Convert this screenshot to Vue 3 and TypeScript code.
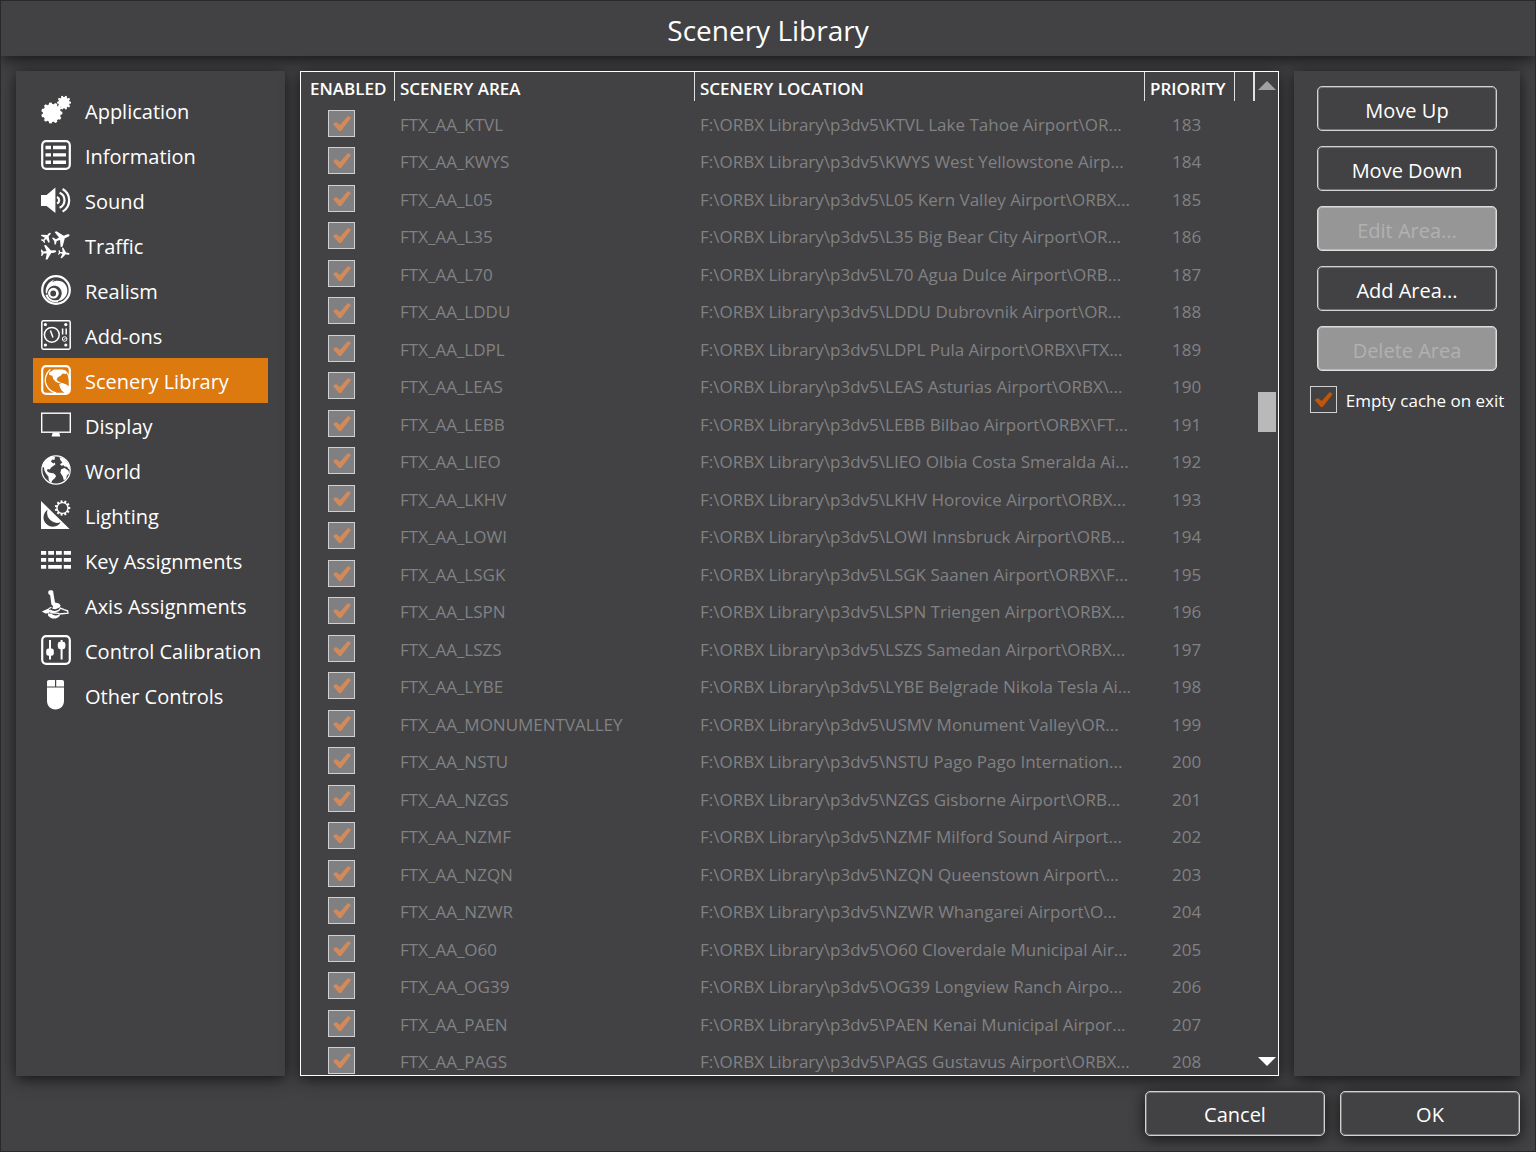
<script setup lang="ts">
import { ref } from 'vue'

interface MenuItem {
  id: string
  label: string
}

interface SceneryArea {
  area: string
  location: string
  priority: number
}

const menu: MenuItem[] = [
  { id: 'application', label: 'Application' },
  { id: 'information', label: 'Information' },
  { id: 'sound', label: 'Sound' },
  { id: 'traffic', label: 'Traffic' },
  { id: 'realism', label: 'Realism' },
  { id: 'addons', label: 'Add-ons' },
  { id: 'scenery', label: 'Scenery Library' },
  { id: 'display', label: 'Display' },
  { id: 'world', label: 'World' },
  { id: 'lighting', label: 'Lighting' },
  { id: 'keys', label: 'Key Assignments' },
  { id: 'axis', label: 'Axis Assignments' },
  { id: 'calibration', label: 'Control Calibration' },
  { id: 'other', label: 'Other Controls' },
]

const entries: [string, string][] = [
  ['KTVL', 'KTVL Lake Tahoe Airport\\OR...'],
  ['KWYS', 'KWYS West Yellowstone Airp...'],
  ['L05', 'L05 Kern Valley Airport\\ORBX...'],
  ['L35', 'L35 Big Bear City Airport\\OR...'],
  ['L70', 'L70 Agua Dulce Airport\\ORB...'],
  ['LDDU', 'LDDU Dubrovnik Airport\\OR...'],
  ['LDPL', 'LDPL Pula Airport\\ORBX\\FTX...'],
  ['LEAS', 'LEAS Asturias Airport\\ORBX\\...'],
  ['LEBB', 'LEBB Bilbao Airport\\ORBX\\FT...'],
  ['LIEO', 'LIEO Olbia Costa Smeralda Ai...'],
  ['LKHV', 'LKHV Horovice Airport\\ORBX...'],
  ['LOWI', 'LOWI Innsbruck Airport\\ORB...'],
  ['LSGK', 'LSGK Saanen Airport\\ORBX\\F...'],
  ['LSPN', 'LSPN Triengen Airport\\ORBX...'],
  ['LSZS', 'LSZS Samedan Airport\\ORBX...'],
  ['LYBE', 'LYBE Belgrade Nikola Tesla Ai...'],
  ['MONUMENTVALLEY', 'USMV Monument Valley\\OR...'],
  ['NSTU', 'NSTU Pago Pago Internation...'],
  ['NZGS', 'NZGS Gisborne Airport\\ORB...'],
  ['NZMF', 'NZMF Milford Sound Airport...'],
  ['NZQN', 'NZQN Queenstown Airport\\...'],
  ['NZWR', 'NZWR Whangarei Airport\\O...'],
  ['O60', 'O60 Cloverdale Municipal Air...'],
  ['OG39', 'OG39 Longview Ranch Airpo...'],
  ['PAEN', 'PAEN Kenai Municipal Airpor...'],
  ['PAGS', 'PAGS Gustavus Airport\\ORBX...'],
]

const areas: SceneryArea[] = entries.map(([code, folder], index) => ({
  area: `FTX_AA_${code}`,
  location: `F:\\ORBX Library\\p3dv5\\${folder}`,
  priority: 183 + index,
}))

const selected = ref('scenery')
const emptyCache = ref(true)

// Closed outline of a cog wheel with square teeth.
function cog(cx: number, cy: number, outer: number, inner: number, teeth: number): string {
  const step = (Math.PI * 2) / teeth
  const points: string[] = []
  for (let i = 0; i < teeth; i++) {
    const corners: [number, number][] = [[-0.34, inner], [-0.2, outer], [0.2, outer], [0.34, inner]]
    for (const [offset, radius] of corners) {
      const angle = (i + offset) * step
      points.push(`${(cx + radius * Math.cos(angle)).toFixed(2)} ${(cy + radius * Math.sin(angle)).toFixed(2)}`)
    }
  }
  return `M${points.join('L')}Z`
}

const plane =
  'M0-10C1-10 1.6-8.5 1.6-7V-3.4L9.5 2.6V5L1.6 2.6L1.2 6.6L4.2 8.8V10.4L0 9.3L-4.2 10.4V8.8L-1.2 6.6L-1.6 2.6L-9.5 5V2.6L-1.6-3.4V-7C-1.6-8.5-1-10 0-10Z'
</script>

<template>
  <div class="window">
    <header class="title-bar">
      <h1>Scenery Library</h1>
    </header>

    <main class="content">
      <nav class="panel menu" aria-label="Settings">
        <button
          v-for="item in menu"
          :key="item.id"
          type="button"
          class="menu-item"
          :class="{ active: item.id === selected }"
          @click="selected = item.id"
        >
          <svg class="icon" viewBox="0 0 30 30" aria-hidden="true">
            <g v-if="item.id === 'application'" class="solid">
              <path :d="cog(10.8, 18, 10.6, 9, 11)" />
              <path :d="cog(23, 7.6, 7, 5.6, 10)" />
            </g>
            <g v-else-if="item.id === 'information'">
              <rect class="line" x="1.2" y="1.2" width="27.6" height="27.6" rx="4" stroke-width="2.2" />
              <path class="solid" d="M4.5 5.8H10V9.2H4.5ZM12 5.8H25V9.2H12ZM4.5 13.2H10V16.6H4.5ZM12 13.2H25V16.6H12ZM4.5 20.6H10V24H4.5ZM12 20.6H25V24H12Z" />
            </g>
            <g v-else-if="item.id === 'sound'">
              <path class="solid" d="M0 10H5.6L14.4 2.600V28L5.6 21H0Z" />
              <path class="line" stroke-width="2.2" d="M16 12A3.6 3.6 0 0 1 16 18.600M18.6 7.800A8.2 8.2 0 0 1 18.6 22.800M21.6 4A13 13 0 0 1 21.6 26.600" />
            </g>
            <g v-else-if="item.id === 'traffic'" class="solid">
              <path :d="plane" transform="translate(5.6 7.2) rotate(42) scale(.58)" />
              <path :d="plane" transform="translate(20.6 8) rotate(68) scale(.86)" />
              <path :d="plane" transform="translate(7.6 22) rotate(84) scale(.76)" />
              <path :d="plane" transform="translate(23 23.2) rotate(98) scale(.56)" />
            </g>
            <g v-else-if="item.id === 'realism'">
              <circle class="line" cx="15" cy="15" r="13.8" stroke-width="2.2" />
              <path class="solid" d="M4.8 18C4 12 7.6 6.4 13.4 4.4C12 5.8 11.4 6.6 11.4 7.2C15.4 4.8 21 5.4 24 9C27.6 13.4 27 20 22.8 23.6C20.6 25.4 18.4 26.2 15.6 26.4C19.6 23.8 21.4 20 20.4 16C19.4 12.2 15.8 10 12.2 10.8C8.6 11.6 6.2 14.4 6.2 18.6Z" />
              <path class="solid" fill-rule="evenodd" d="M12.4 12.8A5.4 5.4 0 1 1 12.4 23.6A5.4 5.4 0 1 1 12.4 12.8ZM12.2 15.6A2.9 2.9 0 1 0 12.2 21.4A2.9 2.9 0 1 0 12.2 15.6Z" />
              <path class="line" stroke-width="2" d="M5.4 19.6C7.6 25.6 12.6 27 17 26" />
            </g>
            <g v-else-if="item.id === 'addons'">
              <rect class="line" x=".8" y=".8" width="28.4" height="28.4" rx="1.6" stroke-width="1.5" />
              <circle class="line" cx="10.8" cy="14.8" r="7.4" stroke-width="1.5" />
              <path class="line" stroke-width="1.5" d="M9.4 10.4L12 17.6M21.6 8.6V14.4M25.2 8.6V14.4" />
              <circle class="line" cx="23.6" cy="19" r="2.3" stroke-width="1" />
              <path class="line" stroke-width="1" d="M22.6 20L24.8 17.8" />
              <g class="solid">
                <circle cx="4.4" cy="4.6" r="1.6" />
                <circle cx="24.8" cy="4.6" r="1.6" />
                <circle cx="4.4" cy="25" r="1.6" />
                <circle cx="24.8" cy="25" r="1.6" />
              </g>
            </g>
            <g v-else-if="item.id === 'scenery'">
              <rect class="line" x="1.2" y="1.2" width="27.6" height="27.6" rx="4" stroke-width="2.2" />
              <path class="line" stroke-width="1.3" d="M9.4 4.2C4 9 3 15.5 5.6 20.6C7.6 24.6 11 27 15 28M23.4 5.2C26.6 7.6 28 11 28.4 14.8" />
              <path class="solid" d="M8.2 7.4L13 4.6L21.8 4.4L25.6 7L25 9L21.6 8.4L20 10.4L16.6 12.6L15.6 14.6L17.2 16.4L19.8 17.2L18.6 18.2L15 17L12.2 14L11.4 10.8L8.4 10Z" />
              <path class="solid" d="M18 19.6L20.6 17.8L24.8 19.2L28.2 21.4V28.2H23.8L20.6 25.2L19.2 22.8Z" />
            </g>
            <g v-else-if="item.id === 'display'">
              <rect class="line" x=".7" y="3.2" width="28.6" height="19" stroke-width="1.4" />
              <path class="solid" d="M11.6 23H18.4L19.2 26.6H10.6Z" />
            </g>
            <g v-else-if="item.id === 'world'">
              <circle class="line" cx="15" cy="15" r="14.2" stroke-width="1.2" />
              <path class="solid" d="M1.2 11.6C2.4 6.6 5.8 3 10.6 1.4L14 2L13.4 5L11.4 4.4L9.8 6.4L12.4 8.4L13.8 7.4L14.4 9.6L10.4 12.2L8.8 14.6L6.6 14L6 16L8 17.6L13 18.6L15.2 21L13.6 23.6L11.4 25.2L10 28.2L7.8 25.6L7.4 21.6L5 18.6L3.4 15.6L3 12.6Z" />
              <path class="solid" d="M18.4 2.2L22.4 3L26 6.4L28.4 10.4L29 14.8L27.2 13.8L26 11.8L23.6 11.6L22.2 10L20.8 11L19 9.2L21.4 7.4L19.6 5.6ZM20.2 14.2L23.6 13L27.6 15.8L28 18.4L25.8 20.4L25.2 24L22.8 25.2L21.8 21.4L19.4 17.8Z" />
            </g>
            <g v-else-if="item.id === 'lighting'">
              <path class="solid" fill-rule="evenodd" d="M0 1L28.6 29H0ZM6.6 9.8A9.2 9.2 0 1 0 19.6 22.2A10 10 0 0 1 6.6 9.8Z" />
              <path class="solid" fill-rule="evenodd" :d="cog(21.5, 8, 7.8, 6, 11) + 'M21.5 3.2A4.8 4.8 0 1 0 21.5 12.8A4.8 4.8 0 1 0 21.5 3.2Z'" />
            </g>
            <g v-else-if="item.id === 'keys'" class="solid">
              <path d="M0 6H5.2V9.8H0ZM7.2 6H13V9.8H7.2ZM15 6H20.8V9.8H15ZM22.8 6H30V9.8H22.8ZM0 13H5.2V16.8H0ZM7.2 13H13V16.8H7.2ZM15 13H20.8V16.8H15ZM22.8 13H30V16.8H22.8ZM0 20H5.2V23.8H0ZM7.2 20H20.8V23.8H7.2ZM22.8 20H30V23.8H22.8Z" />
            </g>
            <g v-else-if="item.id === 'axis'">
              <path class="solid" d="M7.4 1.2C8 0 11.4-.2 12.2 1.2L12.4 3.2L14 12.4L18 13.6L19.6 15.4L18.6 17.6L14.4 19.2L11.2 18.8L12 16L10.4 14.6L9.2 5.4L7.2 3.6Z" />
              <path class="line" stroke-width="1.3" d="M10.4 17.2L7.6 18.8M9 20C12 22.8 18 21.8 19.4 18.2L23 19.6L26.6 20.8L27 23.2L18.6 24C16.6 22.6 12.6 24 8.6 21.6" />
              <path class="solid" d="M.8 21.4L7.4 18.6L9.4 21L7.4 23.2L4.4 23.6ZM7 23.2L10.4 23.6C12 25.6 15.6 26 18 24.4L19 25.4C16.6 29.4 9.6 29.6 7 25.4Z" />
            </g>
            <g v-else-if="item.id === 'calibration'">
              <rect class="line" x="1.2" y="1.2" width="27.6" height="27.6" rx="4" stroke-width="2.2" />
              <path class="line" stroke-width="2" d="M9 5V24.6M20.6 5V24.6" />
              <rect class="solid" x="5.2" y="13.4" width="7.6" height="7.4" rx="2.4" />
              <rect class="solid" x="16.8" y="6.8" width="7.6" height="7.4" rx="2.4" />
            </g>
            <g v-else class="solid">
              <path d="M14 0V6.4H6V2.2C6 .8 6.8 0 8 0ZM15.2 0H21C22.4 0 23 .8 23 2.2V6.4H15.2ZM6 7.6H23V20.6C23 26 19.6 29.6 14.5 29.6C9.4 29.6 6 26 6 20.6Z" />
            </g>
          </svg>
          <span>{{ item.label }}</span>
        </button>
      </nav>

      <section class="panel list" aria-label="Scenery areas">
        <div class="table-view">
          <table>
            <colgroup>
              <col class="col-enabled" />
              <col class="col-area" />
              <col class="col-location" />
              <col class="col-priority" />
              <col />
            </colgroup>
            <thead>
              <tr>
                <th class="centered"><div>ENABLED</div></th>
                <th><div>SCENERY AREA</div></th>
                <th><div>SCENERY LOCATION</div></th>
                <th><div>PRIORITY</div></th>
                <th class="last"><div></div></th>
              </tr>
            </thead>
            <tbody>
              <tr v-for="row in areas" :key="row.area">
                <td class="check-cell">
                  <input type="checkbox" class="check" checked disabled :aria-label="`Enable ${row.area}`" />
                </td>
                <td>{{ row.area }}</td>
                <td>{{ row.location }}</td>
                <td class="priority">{{ row.priority }}</td>
                <td></td>
              </tr>
            </tbody>
          </table>
        </div>
        <div class="scroll-bar">
          <button type="button" class="arrow up" aria-label="Scroll up"></button>
          <div class="track">
            <div class="thumb"></div>
          </div>
          <button type="button" class="arrow down" aria-label="Scroll down"></button>
        </div>
      </section>

      <aside class="panel actions">
        <button type="button" class="button">Move Up</button>
        <button type="button" class="button">Move Down</button>
        <button type="button" class="button" disabled>Edit Area...</button>
        <button type="button" class="button">Add Area...</button>
        <button type="button" class="button" disabled>Delete Area</button>
        <label class="option">
          <input v-model="emptyCache" type="checkbox" class="check" />
          <span>Empty cache on exit</span>
        </label>
      </aside>
    </main>

    <footer class="footer">
      <button type="button" class="button raised">Cancel</button>
      <button type="button" class="button raised">OK</button>
    </footer>
  </div>
</template>

<style>
body {
  margin: 0;
  background: #424244;
}
</style>

<style scoped>
* {
  box-sizing: border-box;
}

.window {
  display: flex;
  flex-direction: column;
  height: 100vh;
  border: 1px solid #29292b;
  background: #424244;
  color: #fff;
  font-family: "Open Sans", "Noto Sans", sans-serif;
  font-size: 20px;
  overflow: hidden;
}

button {
  font: inherit;
  color: inherit;
}

.title-bar {
  flex: none;
  height: 55px;
  display: flex;
  align-items: center;
  justify-content: center;
  background: #424244;
  box-shadow: 0 3px 15px rgba(0, 0, 0, 0.7);
}

h1 {
  margin: 0;
  padding-top: 2px;
  font-size: 28px;
  line-height: 40px;
  font-weight: 400;
}

.content {
  flex: 1;
  min-height: 0;
  display: flex;
  gap: 15px;
  padding: 15px 15px 0;
}

.panel {
  background: #424244;
  box-shadow: 0 3px 15px rgba(0, 0, 0, 0.7);
}

.menu {
  flex: none;
  width: 269px;
  padding: 17px;
}

.menu-item {
  display: flex;
  align-items: center;
  gap: 14px;
  width: 100%;
  height: 45px;
  padding: 0 0 0 8px;
  border: 0;
  background: none;
  text-align: left;
  white-space: nowrap;
}

.menu-item span {
  padding-top: 2px;
}

.menu-item.active {
  background: #dc790f;
}

.icon {
  flex: none;
  width: 30px;
  height: 30px;
  margin-bottom: 2px;
}

.solid {
  fill: #fff;
}

.line {
  fill: none;
  stroke: #fff;
}

.list {
  flex: 1;
  min-width: 0;
  display: flex;
  border: 1px solid #fff;
}

.table-view {
  flex: 1;
  min-width: 0;
  overflow: hidden;
}

table {
  width: 100%;
  table-layout: fixed;
  border-collapse: collapse;
}

.col-enabled {
  width: 94px;
}

.col-area {
  width: 300px;
}

.col-location {
  width: 450px;
}

.col-priority {
  width: 90px;
}

th {
  height: 33px;
  padding: 0;
  vertical-align: top;
  font-size: 17px;
  font-weight: 600;
  text-align: left;
  white-space: nowrap;
}

th div {
  height: 29px;
  padding-left: 5px;
  border-right: 1px solid #e0e0e0;
  line-height: 34px;
}

th.centered div {
  padding-left: 9px;
}

th.last div {
  border-right-width: 2px;
}

td {
  height: 37px;
  padding: 8px 0 0 5px;
  vertical-align: top;
  color: #818183;
  font-size: 17px;
  line-height: 24px;
  white-space: nowrap;
  overflow: hidden;
}

tr:nth-child(even) td {
  height: 38px;
}

td.check-cell {
  padding: 5px 0 0 27px;
}

td.priority {
  padding-left: 27px;
}

.check {
  appearance: none;
  display: block;
  flex: none;
  width: 27px;
  height: 27px;
  margin: 0;
  border: 1px solid #d0d0d0;
  background: transparent;
}

.check:checked::before {
  content: "";
  display: block;
  width: 25px;
  height: 25px;
  background: #bf560a;
  clip-path: polygon(4px 13px, 7px 11px, 11px 14px, 19px 5px, 22px 7px, 12px 20px, 10px 20px);
}

.check:disabled {
  background: #808082;
}

.check:disabled::before {
  background: #d48a58;
}

.scroll-bar {
  flex: none;
  width: 23px;
  padding: 0 1px 0 2px;
  display: flex;
  flex-direction: column;
  align-items: center;
}

.arrow {
  width: 18px;
  height: 27px;
  padding: 0;
  border: 0;
  background: none;
  display: flex;
  justify-content: center;
  align-items: center;
}

.arrow::before {
  content: "";
  width: 18px;
  height: 9px;
  background: #fff;
}

.arrow.up::before {
  background: #a0a0a2;
  clip-path: polygon(50% 0, 100% 100%, 0 100%);
}

.arrow.down::before {
  clip-path: polygon(0 0, 100% 0, 50% 100%);
}

.track {
  flex: 1;
  width: 18px;
  padding-top: 293px;
}

.thumb {
  height: 40px;
  background: #b9b9b9;
}

.actions {
  flex: none;
  width: 226px;
  padding: 15px;
  display: flex;
  flex-direction: column;
  align-items: center;
  gap: 15px;
}

.button {
  flex: none;
  width: 180px;
  height: 45px;
  padding: 3px 0 0;
  border: 1px solid #d2d2d2;
  border-radius: 5px;
  background: #424244;
  box-shadow: inset 0 0 0 1px #77777a;
}

.button:disabled {
  background: #969696;
  border-color: #dedede;
  box-shadow: inset 0 0 0 1px #b8b8b8;
  color: #b1b1b1;
}

.button.raised {
  padding-top: 1px;
  box-shadow: inset 0 0 0 1px #77777a, 0 3px 15px rgba(0, 0, 0, 0.7);
}

.option {
  display: flex;
  align-items: center;
  gap: 9px;
  font-size: 17px;
  line-height: 24px;
  white-space: nowrap;
}

.option span {
  padding-top: 2px;
}

.footer {
  flex: none;
  display: flex;
  justify-content: flex-end;
  gap: 15px;
  padding: 15px;
}
</style>
